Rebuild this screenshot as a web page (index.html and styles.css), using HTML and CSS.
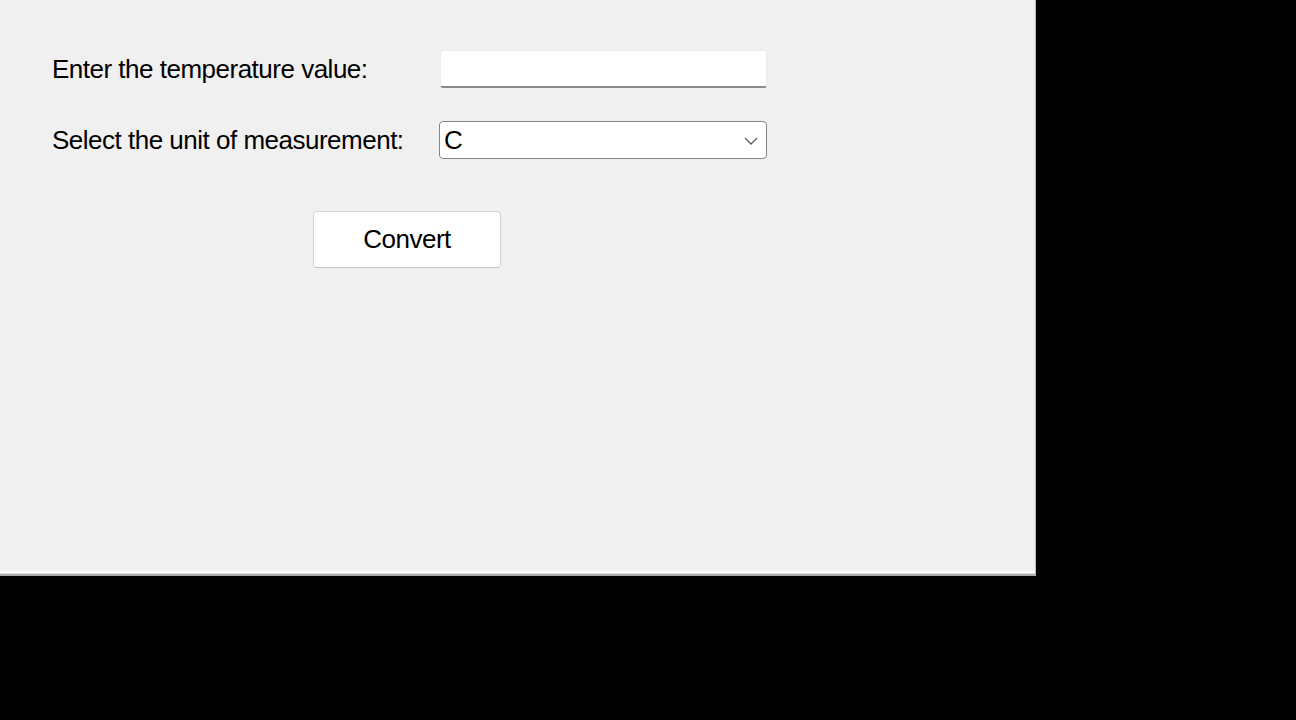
FILE: index.html
```html
<!DOCTYPE html>
<html lang="en">
<head>
<meta charset="utf-8">
<title>Temperature Converter</title>
<link rel="stylesheet" href="styles.css">
</head>
<body>
<div class="window">
  <div class="form">
    <div class="row">
      <label class="label" for="temp">Enter the temperature value:</label>
      <input class="text-input" id="temp" type="text">
    </div>
    <div class="row">
      <span class="label">Select the unit of measurement:</span>
      <div class="combo">
        <span class="combo-value">C</span>
        <svg class="chevron" width="14" height="8" viewBox="0 0 14 8"><path d="M1 1 L7 7 L13 1" fill="none" stroke="#5a5a5a" stroke-width="1.3"/></svg>
      </div>
    </div>
    <button class="btn" type="button">Convert</button>
  </div>
  <div class="bottom-edge"></div>
</div>
</body>
</html>
```
FILE: styles.css
```css
html, body {
  margin: 0;
  padding: 0;
  background: #000;
  width: 1296px;
  height: 720px;
  overflow: hidden;
}
.window {
  width: 1036px;
  height: 576px;
  background: #f0f0f0;
  display: flex;
  flex-direction: column;
  box-sizing: border-box;
  border-right: 1px solid #b8b8b8;
}
.form {
  flex: 1;
  display: flex;
  flex-direction: column;
  padding: 50px 0 0 52px;
  font-family: "Liberation Sans", Arial, sans-serif;
  font-size: 26px;
  letter-spacing: -0.5px;
  color: #000;
}
.row {
  display: flex;
  align-items: center;
  height: 38px;
  margin-bottom: 33px;
}
.row:nth-child(2) { margin-bottom: 52px; }
.label {
  width: 387px;
  flex: none;
  line-height: 38px;
}
.text-input {
  width: 327px;
  height: 38px;
  box-sizing: border-box;
  margin: 0 0 0 1px;
  padding: 0 6px;
  background: #fff;
  border: 1px solid #ececec;
  border-bottom: 2px solid #8a8a8a;
  border-radius: 3px;
  font: inherit;
  outline: none;
}
.combo {
  width: 328px;
  height: 38px;
  box-sizing: border-box;
  background: #fff;
  border: 1px solid #858585;
  border-radius: 4px;
  display: flex;
  align-items: center;
  justify-content: space-between;
  padding: 0 8px 0 4px;
}
.combo-value {
  line-height: 36px;
}
.chevron {
  display: block;
  margin-top: 2px;
}
.btn {
  align-self: flex-start;
  margin-left: 261px;
  width: 188px;
  height: 57px;
  box-sizing: border-box;
  background: #ffffff;
  border: 1px solid #d3d3d3;
  border-bottom-color: #c4c4c4;
  border-radius: 4px;
  font-family: "Liberation Sans", Arial, sans-serif;
  font-size: 26px;
  letter-spacing: -0.5px;
  color: #000;
  padding: 0;
}
.bottom-edge {
  height: 6px;
  background: linear-gradient(#f0f0f0 0, #f0f0f0 1px, #fbfbfb 1px, #fbfbfb 3px, #e0e0e0 3px, #e0e0e0 4px, #a8a8a8 4px);
}
```
